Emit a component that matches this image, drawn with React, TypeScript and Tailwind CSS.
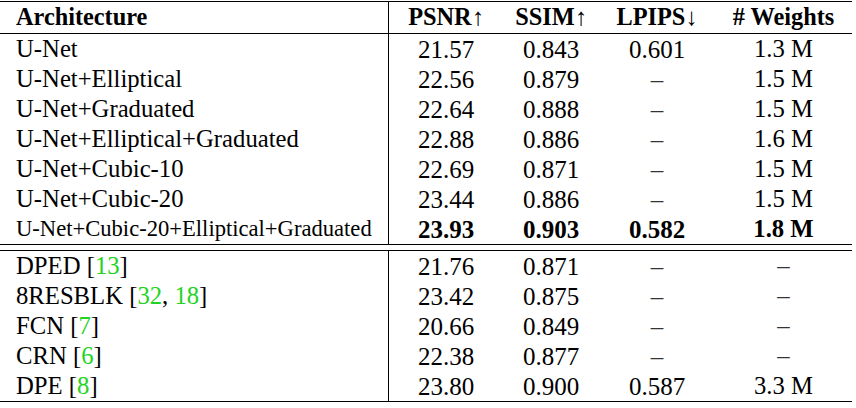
import React from 'react';

type Row = {
  name: React.ReactNode;
  psnr: string;
  ssim: string;
  lpips: string;
  weights: string;
  bold?: boolean;
  small?: boolean;
};

const Cite = ({ n }: { n: string }) => <span className="text-[#22d422]">{n}</span>;

const ours: Row[] = [
  { name: 'U-Net', psnr: '21.57', ssim: '0.843', lpips: '0.601', weights: '1.3 M' },
  { name: 'U-Net+Elliptical', psnr: '22.56', ssim: '0.879', lpips: '–', weights: '1.5 M' },
  { name: 'U-Net+Graduated', psnr: '22.64', ssim: '0.888', lpips: '–', weights: '1.5 M' },
  { name: 'U-Net+Elliptical+Graduated', psnr: '22.88', ssim: '0.886', lpips: '–', weights: '1.6 M' },
  { name: 'U-Net+Cubic-10', psnr: '22.69', ssim: '0.871', lpips: '–', weights: '1.5 M' },
  { name: 'U-Net+Cubic-20', psnr: '23.44', ssim: '0.886', lpips: '–', weights: '1.5 M' },
  {
    name: 'U-Net+Cubic-20+Elliptical+Graduated',
    psnr: '23.93',
    ssim: '0.903',
    lpips: '0.582',
    weights: '1.8 M',
    bold: true,
    small: true,
  },
];

const others: Row[] = [
  { name: <>DPED [<Cite n="13" />]</>, psnr: '21.76', ssim: '0.871', lpips: '–', weights: '–' },
  {
    name: (
      <>
        8RESBLK [<Cite n="32" />
        {', '}
        <Cite n="18" />]
      </>
    ),
    psnr: '23.42',
    ssim: '0.875',
    lpips: '–',
    weights: '–',
  },
  { name: <>FCN [<Cite n="7" />]</>, psnr: '20.66', ssim: '0.849', lpips: '–', weights: '–' },
  { name: <>CRN [<Cite n="6" />]</>, psnr: '22.38', ssim: '0.877', lpips: '–', weights: '–' },
  { name: <>DPE [<Cite n="8" />]</>, psnr: '23.80', ssim: '0.900', lpips: '0.587', weights: '3.3 M' },
];

const cols = 'grid grid-cols-[389px_114px_96px_116px_137px]';

const Dash = ({ v }: { v: string }) =>
  v === '–' ? <span className="text-[#333]">–</span> : <>{v}</>;

const TableRow = ({ r }: { r: Row }) => (
  <div className={`${cols} h-[30px] items-stretch ${r.bold ? 'font-bold' : ''}`}>
    <div
      className={`flex items-center border-r border-black pl-4 ${
        r.small ? 'text-[22.6px] font-normal' : 'text-[24.7px]'
      }`}
    >
      <span className="whitespace-pre">{r.name}</span>
    </div>
    <div className="flex items-center justify-center text-[25px]">{r.psnr}</div>
    <div className="flex items-center justify-center text-[25px]">{r.ssim}</div>
    <div className="flex items-center justify-center text-[25px]">
      <Dash v={r.lpips} />
    </div>
    <div className="flex items-center justify-center text-[24.7px]">
      <Dash v={r.weights} />
    </div>
  </div>
);

export default function App() {
  return (
    <div className="w-[856px] h-[408px] bg-white pt-px font-[family-name:Liberation_Serif,Times_New_Roman,serif] text-black leading-none">
      <div className="w-[852px]">
        <div className="border-t-[1.5px] border-black" />
        <div className={`${cols} h-[32px] border-b-[1.5px] border-black font-bold text-[24.3px]`}>
          <div className="flex items-center border-r border-black pl-4">Architecture</div>
          <div className="flex items-center justify-center">PSNR↑</div>
          <div className="flex items-center justify-center">SSIM↑</div>
          <div className="flex items-center justify-center">LPIPS↓</div>
          <div className="flex items-center justify-center whitespace-pre"># Weights</div>
        </div>
        {ours.map((r, i) => (
          <TableRow key={i} r={r} />
        ))}
        <div className="border-t-[1.5px] border-black" />
        <div className="h-[5px]" />
        <div className="border-t-[1.5px] border-black" />
        {others.map((r, i) => (
          <TableRow key={i} r={r} />
        ))}
        <div className="border-t-[1.5px] border-black" />
      </div>
    </div>
  );
}
